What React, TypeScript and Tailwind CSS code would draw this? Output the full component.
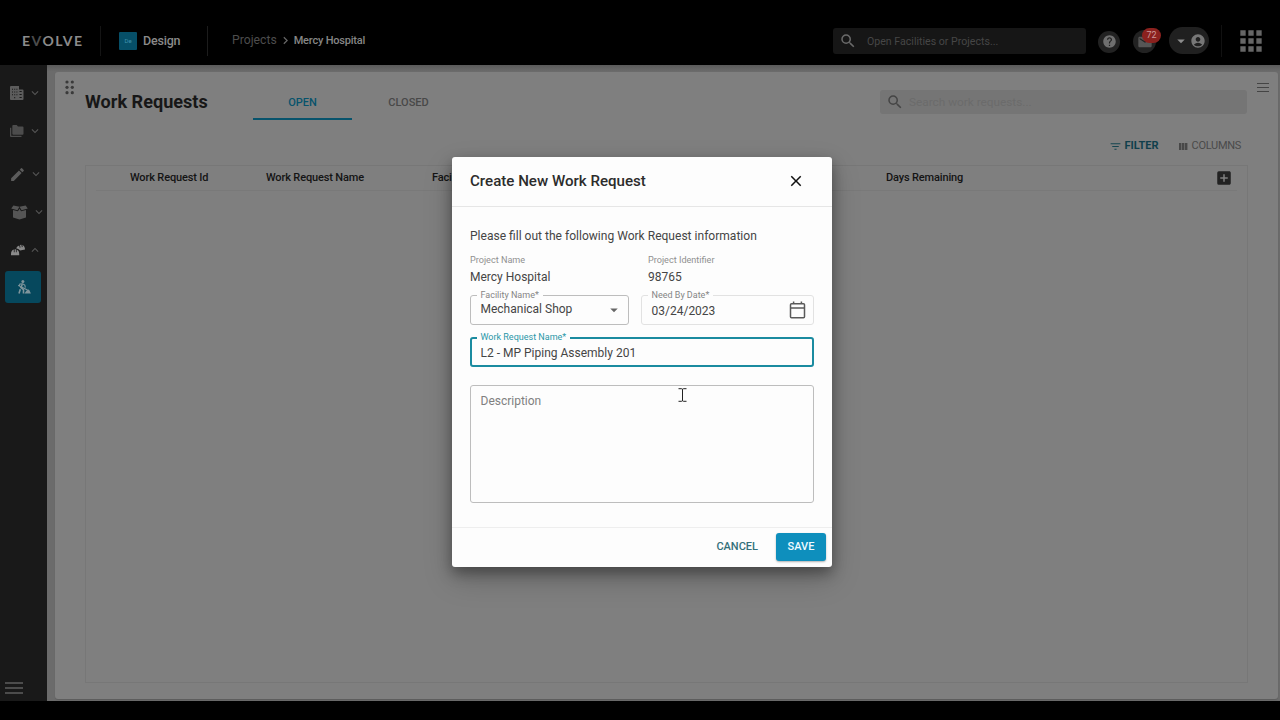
import { useState } from 'react';
import type { ReactNode } from 'react';
import {
  MdAccountCircle,
  MdAddBox,
  MdApps,
  MdArrowDropDown,
  MdChevronRight,
  MdClose,
  MdEdit,
  MdEmail,
  MdExpandLess,
  MdExpandMore,
  MdFilterList,
  MdHelp,
  MdSearch,
} from 'react-icons/md';

function BuildingIcon() {
  return (
    <svg width="14" height="14" viewBox="0 0 14 14" fill="none">
      <path
        d="M1 0h8v3.500h3.500q1 0 1 1V13q0 1-1 1H1q-1 0-1-1V1q0-1 1-1z"
        fill="#5c5c5c"
      />
      <path
        d="M2 3.200h1M4.200 3.200h1M6.400 3.200h1M2 6h1M4.200 6h1M6.400 6h1M2 8.800h1M4.200 8.800h1M6.400 8.800h1M4.200 11.600h1M9.500 5.500h2.200M9.500 8.500h2.200M9.500 11.500h2.200"
        stroke="#191919"
        strokeWidth="1.100"
      />
    </svg>
  );
}

function FoldersIcon() {
  return (
    <svg width="14" height="13" viewBox="0 0 14 13" fill="#4c4c4c">
      <path d="M3.300 0h3.400l1.300 1.500h4.500q1 0 1 1v6.200q0 1-1 1H3.300q-1 0-1-1V1q0-1 1-1z" />
      <path d="M0 2.800h1.300v8h10.200V12H1q-1 0-1-1z" />
    </svg>
  );
}

function OpenBoxIcon() {
  return (
    <svg width="17" height="15" viewBox="0 0 17 15" fill="#555">
      <path d="M2.400.5 8.500 1.700 6.400 5.200.2 3.600zM14.600.5 8.500 1.700l2.100 3.500 6.200-1.600z" />
      <path d="M2 4.900l4.900 1.300 1.600-2.400 1.600 2.400 4.900-1.300v7.700l-6.500 1.900L2 12.600z" />
    </svg>
  );
}

function HardHatsIcon() {
  return (
    <svg width="14" height="12" viewBox="0 0 14 12" fill="#8a8a8a">
      <path d="M0 11.200V10c0-2.300 1.200-3.900 2.800-4.400v2.600h.8V5.300h1.300v2.900h.8V5.600C7.200 6.200 8.200 7.800 8.200 10v1.200z" />
      <path d="M5.300 4.400C5.800 2.900 6.900 1.900 8.200 1.500l.5 2.300.8-.2-.5-2.600 1.300-.3.600 2.600.8-.2-.4-2.100c1.300.4 2.200 1.500 2.500 3.100l.2 1.300-4.900 1.200C8.500 5.500 7.200 4.500 5.300 4.400z" />
    </svg>
  );
}

function DiggingIcon() {
  return (
    <svg width="14" height="14" viewBox="0 0 14 14" fill="none">
      <circle cx="5.900" cy="1.600" r="1.500" fill="#7f959c" />
      <path
        d="M5.300 4.200 3.900 7.400l2.600 2.200v3.900M3.300 9.300 2 13.500"
        stroke="#7f959c"
        strokeWidth="1.600"
      />
      <path
        d="M2 6.500 2.900 4l2.700-.3 2.200 1.400.6 2.500M1.200 5.300l9.200 4.600"
        stroke="#7f959c"
        strokeWidth="1.100"
      />
      <path d="M7.500 13.600 9.200 11l1.900-1.700 1.400 1.200 1.400 3.100z" fill="#7f959c" />
    </svg>
  );
}

function CalendarIcon() {
  return (
    <svg
      className="mr-[7px] ml-auto"
      width="17"
      height="18"
      viewBox="0 0 17 18"
      fill="none"
      stroke="#5a5a5a"
      strokeWidth="1.500"
    >
      <rect x="1.500" y="2.700" width="14" height="14" rx="1" />
      <path d="M1.500 7h14M4.600.5v2.500M12.400.5v2.500" />
    </svg>
  );
}

function ColumnsIcon() {
  return (
    <svg width="9" height="7" viewBox="0 0 9 7" fill="#484848">
      <path d="M0 0h2.400v7H0zM3 0h2.400v7H3zM6 0h2.400v7H6z" />
    </svg>
  );
}

function DragIcon() {
  return (
    <svg width="10" height="15" viewBox="0 0 10 15" fill="#3a3a3a">
      <circle cx="2" cy="2" r="1.600" />
      <circle cx="7.300" cy="2" r="1.600" />
      <circle cx="2" cy="7.300" r="1.600" />
      <circle cx="7.300" cy="7.300" r="1.600" />
      <circle cx="2" cy="12.700" r="1.600" />
      <circle cx="7.300" cy="12.700" r="1.600" />
    </svg>
  );
}

function TextCursor() {
  return (
    <svg width="9" height="14" viewBox="0 0 9 14" fill="none" stroke="#222">
      <path d="M.5.700h2.800q1.200 0 1.200.8 0-.8 1.200-.8h2.800M4.500 1.200v11.600M.5 13.300h2.800q1.200 0 1.200-.8 0 .8 1.200.8h2.800" />
    </svg>
  );
}

function Header() {
  return (
    <header className="flex h-[65px] shrink-0 items-center bg-black pt-4">
      <div className="flex h-[30px] w-[101px] items-center border-r border-[#141414] pl-[22px] font-['Lato'] text-[14px] font-bold tracking-[1.400px] text-[#8b8b8b]">
        E<span className="text-[#4c4c4c]">V</span>OLVE
      </div>
      <div className="flex h-[30px] w-[107px] items-center border-r border-[#1c1c1c] pl-[18px]">
        <div className="flex h-[18px] w-[18px] items-center justify-center rounded-[1px] bg-[#064f68] text-[6px] text-[#3f93ad]">
          De
        </div>
        <span className="ml-[6px] pt-[1px] text-[12.500px] font-medium tracking-[-0.2px] text-[#8a8a8a]">
          Design
        </span>
      </div>
      <nav className="flex items-center pl-6">
        <span className="text-[12.200px] text-[#4d4d4d]">Projects</span>
        <MdChevronRight className="mx-[1px] h-[15px] w-[15px] text-[#666]" />
        <span className="pt-[1px] text-[11px] font-medium tracking-[-0.2px] text-[#868686]">
          Mercy Hospital
        </span>
      </nav>
      <div className="ml-auto flex h-[26px] w-[253px] items-center rounded-[3px] bg-[#161616]">
        <MdSearch className="ml-[6px] h-[18px] w-[18px] text-[#6a6a6a]" />
        <span className="ml-[10px] pt-[2px] text-[10.600px] text-[#464646]">
          Open Facilities or Projects...
        </span>
      </div>
      <div className="mt-[2px] ml-3 flex h-[22px] w-[22px] items-center justify-center rounded-full bg-[#222]">
        <MdHelp className="h-[15px] w-[15px] text-[#6f6f6f]" />
      </div>
      <div className="relative mt-[2px] ml-[13px] flex h-[23px] w-[23px] items-center justify-center rounded-full bg-[#222]">
        <MdEmail className="h-[16px] w-[16px] text-[#565656]" />
        <span className="absolute -top-[2px] left-[9px] flex h-[15px] w-[19px] items-center justify-center rounded-full bg-[#8b211e] text-[9px] text-[#c99]">
          72
        </span>
      </div>
      <div className="ml-[13px] flex h-[27px] w-[40px] items-center justify-center rounded-full bg-[#202020]">
        <MdArrowDropDown className="h-[18px] w-[18px] text-[#8c8c8c]" />
        <MdAccountCircle className="h-[16px] w-[16px] text-[#777]" />
      </div>
      <div className="flex h-[32px] w-[71px] items-center pl-[12px]">
        <div className="flex h-full items-center border-l border-[#111] pl-[13px]">
          <MdApps className="h-[32px] w-[32px] text-[#666]" />
        </div>
      </div>
    </header>
  );
}

type SidebarItemProps = {
  className: string;
  open?: boolean;
  children: ReactNode;
};

function SidebarItem({ className, open, children }: SidebarItemProps) {
  const Chevron = open ? MdExpandLess : MdExpandMore;
  return (
    <div className={`flex items-center text-[#4f4f4f] ${className}`}>
      {children}
      <Chevron className="h-[14px] w-[14px] text-[#555]" />
    </div>
  );
}

function Sidebar() {
  return (
    <aside className="flex w-[47px] shrink-0 flex-col bg-[#191919]">
      <SidebarItem className="mt-[9px] h-[38px] gap-1 pl-[10px]">
        <BuildingIcon />
      </SidebarItem>
      <SidebarItem className="h-[38px] gap-1 pl-[10px]">
        <FoldersIcon />
      </SidebarItem>
      <SidebarItem className="mt-[5px] h-[38px] gap-[3px] pl-[9px]">
        <MdEdit className="h-[17px] w-[17px] text-[#5c5c5c]" />
      </SidebarItem>
      <SidebarItem className="h-[38px] gap-[4px] pl-[11px]">
        <OpenBoxIcon />
      </SidebarItem>
      <SidebarItem className="h-[38px] gap-[3px] pl-[11px]" open>
        <HardHatsIcon />
      </SidebarItem>
      <div className="mt-[2px] ml-[5px] flex h-[32px] w-[36px] items-center justify-center rounded-[3px] bg-[#06485d] pl-[2px]">
        <DiggingIcon />
      </div>
      <div className="mt-auto mb-[7px] ml-[5px] flex w-[18px] flex-col gap-[3px]">
        <div className="h-[2px] bg-[#4c4c4c]" />
        <div className="h-[2px] bg-[#4c4c4c]" />
        <div className="h-[2px] bg-[#4c4c4c]" />
      </div>
    </aside>
  );
}

function WorkRequests() {
  return (
    <main className="flex min-w-0 flex-1 bg-[#6b6b6b] bg-linear-to-b from-[#5a5a5a] to-[#6b6b6b] to-1% pt-[7px] pr-[2px] pb-[2px] pl-2">
      <section className="flex w-full flex-col rounded-[3px] bg-[#7f7f7f] shadow-[0_1px_1px_#5d5d5d]">
        <div className="flex h-[48px]">
          <div className="w-[30px] pt-2 pl-[10px]">
            <DragIcon />
          </div>
          <h1 className="w-[168px] pt-[18px] text-[18.100px] leading-6 font-bold text-[#171717]">
            Work Requests
          </h1>
          <div className="flex w-[99px] items-center justify-center border-b-2 border-[#07536c] pt-4 text-[11px] font-medium text-[#07536c]">
            OPEN
          </div>
          <div className="flex w-[113px] items-center justify-center pt-[14px] text-[11px] font-medium text-[#484848]">
            CLOSED
          </div>
          <div className="mt-[18px] ml-auto flex h-6 w-[367px] items-center rounded-[3px] bg-[#757575] pl-[6px]">
            <MdSearch className="h-[18px] w-[18px] text-[#454545]" />
            <span className="ml-[5px] pt-[2px] text-[11.800px] text-[#6b6b6b]">
              Search work requests...
            </span>
          </div>
          <div className="mt-[11px] mr-[9px] ml-[10px] flex w-[12px] flex-col gap-[3px]">
            <div className="h-px bg-[#444]" />
            <div className="h-px bg-[#444]" />
            <div className="h-px bg-[#444]" />
          </div>
        </div>
        <div className="mt-[15px] mr-[37px] flex h-[22px] items-center justify-end pt-[1px] text-[11px]">
          <MdFilterList className="mr-[3px] h-[13px] w-[13px] text-[#164550]" />
          <span className="mr-[20px] font-bold text-[#103f4c]">FILTER</span>
          <ColumnsIcon />
          <span className="ml-[4px] tracking-[-0.3px] text-[#4a4a4a]">
            COLUMNS
          </span>
        </div>
        <div className="mt-2 mr-[30px] mb-4 ml-[30px] flex-1 border border-[#777]">
          <div className="mx-[10px] flex h-[25px] items-center border-b border-[#797979] text-[11px] font-medium tracking-[-0.150px] text-[#141414]">
            <span className="w-[136px] pt-[1px] pl-[34px]">Work Request Id</span>
            <span className="w-[165px] pt-[1px] pl-[34px]">
              Work Request Name
            </span>
            <span className="w-[455px] pt-[1px] pl-[35px]">Facility</span>
            <span className="pt-[1px] pl-[34px]">Days Remaining</span>
            <MdAddBox className="mr-[4px] ml-auto h-[18px] w-[18px] text-[#222]" />
          </div>
        </div>
      </section>
    </main>
  );
}

type FieldProps = {
  label: string;
  className: string;
  labelClassName?: string;
  children: ReactNode;
};

function Field({ label, className, labelClassName, children }: FieldProps) {
  return (
    <div
      className={`relative flex h-[30px] items-center rounded-[3px] ${className}`}
    >
      <label
        className={`absolute bg-[#fdfdfd] px-1 text-[9px] leading-[11px] ${
          labelClassName || '-top-[6px] left-[5.500px] text-[#858585]'
        }`}
      >
        {label}
      </label>
      {children}
    </div>
  );
}

function CreateWorkRequestDialog() {
  const [name, setName] = useState('L2 - MP Piping Assembly 201');
  const [description, setDescription] = useState('');

  return (
    <div className="flex h-[410px] w-[380px] flex-col rounded-[3px] bg-[#fdfdfd] text-[#454545] shadow-[0_6px_14px_rgba(0,0,0,0.35),0_12px_30px_rgba(0,0,0,0.2)]">
      <div className="flex h-[50px] shrink-0 items-center justify-between border-b border-[#e6e6e6] pr-[27px] pb-[1px] pl-[18px]">
        <h2 className="text-[15.100px] font-medium text-[#2c2c2c]">
          Create New Work Request
        </h2>
        <MdClose className="h-[18px] w-[18px] text-[#111]" />
      </div>

      <div className="flex flex-1 flex-col px-[18px] pt-[21px]">
        <p className="text-[12.050px] leading-4">
          Please fill out the following Work Request information
        </p>
        <div className="mt-[10px] flex">
          <div className="w-[178px]">
            <div className="text-[9.100px] leading-3 text-[#909090]">
              Project Name
            </div>
            <div className="mt-[3px] text-[12px] leading-4">Mercy Hospital</div>
          </div>
          <div>
            <div className="text-[9.100px] leading-3 text-[#909090]">
              Project Identifier
            </div>
            <div className="mt-[3px] text-[12px] leading-4">98765</div>
          </div>
        </div>

        <div className="mt-[10px] flex gap-3">
          <Field
            label="Facility Name*"
            className="w-[159px] border border-[#bdbdbd] pl-[9.500px]"
          >
            <span className="pb-[2px] text-[12px]">Mechanical Shop</span>
            <MdArrowDropDown className="mr-[5px] ml-auto h-[18px] w-[18px] text-[#666]" />
          </Field>
          <Field
            label="Need By Date*"
            className="w-[173px] border border-[#e2e2e2] pl-[9.500px]"
          >
            <span className="pt-[1px] text-[12px]">03/24/2023</span>
            <CalendarIcon />
          </Field>
        </div>

        <Field
          label="Work Request Name*"
          className="mt-[12px] border-2 border-[#1b8ba0] pl-[8.500px]"
          labelClassName="-top-[7px] left-[4.500px] text-[#2a97a8]"
        >
          <input
            className="w-full pt-[2px] text-[12px] outline-none"
            value={name}
            onChange={(e) => setName(e.target.value)}
          />
        </Field>

        <textarea
          className="mt-[18px] h-[118px] resize-none rounded-[3px] border border-[#bdbdbd] px-[9.500px] pt-[7px] text-[12px] leading-4 outline-none placeholder:text-[#808080]"
          placeholder="Description"
          value={description}
          onChange={(e) => setDescription(e.target.value)}
        />
      </div>

      <div className="flex h-[40px] shrink-0 items-center justify-end border-t border-[#eee] pr-[6px] pb-[1px] text-[11px] font-medium">
        <button className="mr-[18px] text-[#34707a]">CANCEL</button>
        <button className="h-[28px] w-[50px] rounded-[3px] bg-[#0e8fbd] text-[#f0fbff] shadow-[0_1px_2px_rgba(0,0,0,0.3)]">
          SAVE
        </button>
      </div>
    </div>
  );
}

export default function App() {
  return (
    <div className="relative flex h-[720px] w-[1280px] flex-col overflow-hidden bg-black pb-[19px] font-['Roboto',sans-serif] whitespace-nowrap">
      <Header />
      <div className="flex min-h-0 flex-1">
        <Sidebar />
        <WorkRequests />
      </div>

      <div className="absolute top-[157px] left-[452px]">
        <CreateWorkRequestDialog />
      </div>
      <div className="absolute top-[388px] left-[678px]">
        <TextCursor />
      </div>
    </div>
  );
}
